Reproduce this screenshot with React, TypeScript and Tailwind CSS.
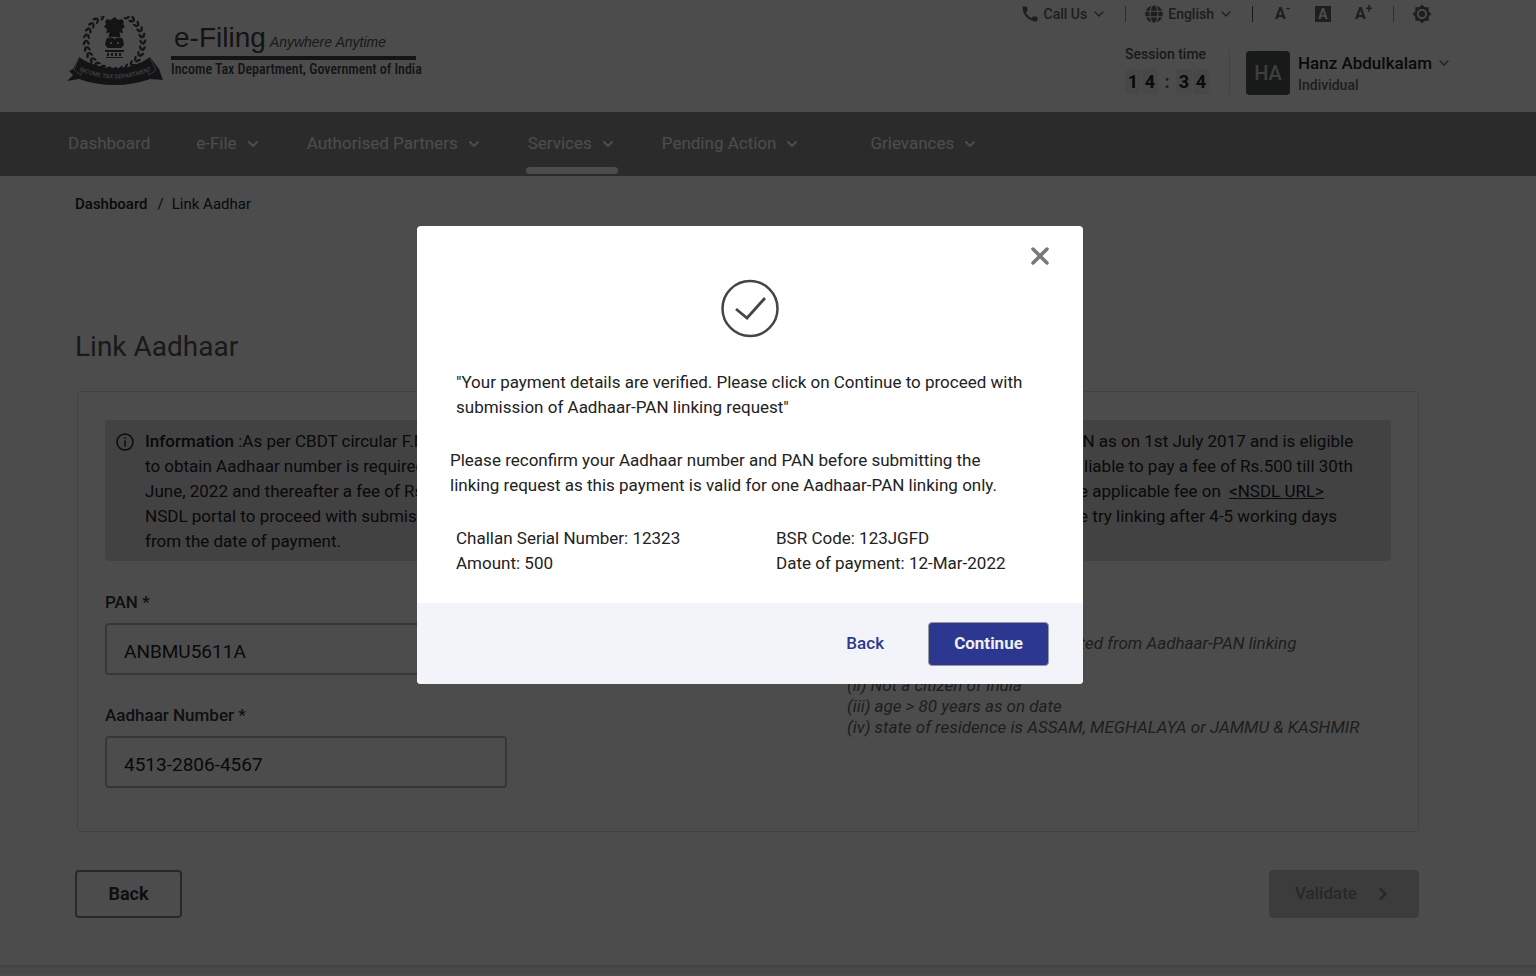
import { useState } from "react";
import { MdBrightnessHigh, MdCall } from "react-icons/md";
import { FaGlobe } from "react-icons/fa";
import { FiChevronDown, FiChevronRight, FiX } from "react-icons/fi";
import clsx from "clsx";

interface NavItem {
    title: string;
    hasMenu: boolean;
}

const navItems: NavItem[] = [
    { title: "Dashboard", hasMenu: false },
    { title: "e-File", hasMenu: true },
    { title: "Authorised Partners", hasMenu: true },
    { title: "Services", hasMenu: true },
    { title: "Pending Action", hasMenu: true },
    { title: "Grievances", hasMenu: true },
];

// angles of the leaf pairs around the wreath, open at the top
const leafAngles = Array.from({ length: 25 }, (_, i) => -64 + i * 12.8);

function Emblem() {
    return (
        <svg
            className="w-24 h-[70px] shrink-0 text-[#404448]"
            viewBox="0 0 96 70"
            fill="currentColor"
            aria-hidden="true"
        >
            {leafAngles.map((angle) => (
                <g key={angle} transform={`translate(47.5 26) rotate(${angle})`}>
                    <ellipse cx="30" cy="0" rx="1.3" ry="3" transform="rotate(28 30 0)" />
                    <ellipse cx="26.6" cy="0" rx="1.2" ry="2.8" transform="rotate(-28 26.6 0)" />
                </g>
            ))}
            <path d="M40 3l3.500 1 4-3 4 3 3.500-1 2 3-1 2 2 2.500-3 3 1 4-4-1.500-1 2.500h-7l-1-2.500-4 1.500 1-4-3-3 2-2.500-1-2z" />
            <path d="M42.500 16h10l1 5h-12zM39 24c1-3 5-3 8.500-1 3.500-2 7.500-2 8.500 1l1 5-3 3H41l-3-3z" />
            <path d="M38 34h19v2H38zM40 37h2v3h-2zM44 37h2v3h-2zM48 37h2v3h-2zM52 37h2v3h-2zM39 41h17v1H39z" />
            <circle cx="44" cy="27" r="1" fill="#fff" />
            <circle cx="51" cy="27" r="1" fill="#fff" />
            <path d="M12 41c22 15 50 15 71 0l9 12 4 11-13-1c-22 8-49 8-71 0L0 65l6-6-4-4 4-2z" />
            <path d="M12 42l-5 12 7 5 1-4M83 42l6 12-7 5-1-4" fill="none" stroke="#fff" strokeWidth="0.600" />
            <path id="ribbon" d="M11 54q36.500 17 75 0" fill="none" />
            <text className="font-bold" fontSize="6" fill="#c0c0c0" textAnchor="middle">
                <textPath href="#ribbon" startOffset="50%">
                    INCOME TAX DEPARTMENT
                </textPath>
            </text>
        </svg>
    );
}

function Logo() {
    return (
        <div className="flex pt-4 gap-2">
            <Emblem />
            <div className="w-[245px] pt-2 font-['Liberation_Sans'] text-[#404448] whitespace-nowrap">
                <div className="flex items-baseline gap-1 pl-[3px] h-9 leading-7 border-b-4 border-[#404448]">
                    <span className="text-[28px]">e-Filing</span>
                    <span className="text-sm italic text-[#555]">Anywhere Anytime</span>
                </div>
                <p className="font-['Roboto_Condensed','Liberation_Sans_Narrow','Liberation_Sans'] text-sm font-medium leading-[18px]">
                    Income Tax Department, Government of India
                </p>
            </div>
        </div>
    );
}

function TopLinks() {
    return (
        <div className="flex items-center gap-[18px] h-7 pr-5 text-sm font-medium text-[#666]">
            <button type="button" className="flex items-center gap-1">
                <MdCall className="size-5" />
                Call Us
                <FiChevronDown className="size-4" />
            </button>
            <span className="w-px h-4 bg-[#999]" />
            <button type="button" className="flex items-center gap-1">
                <FaGlobe className="size-[18px] mx-px" />
                English
                <FiChevronDown className="size-4" />
            </button>
            <span className="w-px h-4 bg-[#555]" />
            <div className="flex items-center gap-6 px-1">
                <button type="button" aria-label="Decrease text size" className="flex items-start w-4 text-base font-bold leading-5">
                    A<span className="text-xs leading-[10px]">-</span>
                </button>
                <button
                    type="button"
                    aria-label="Normal text size"
                    className="size-4 bg-[#666] text-white text-sm font-bold leading-4"
                >
                    A
                </button>
                <button type="button" aria-label="Increase text size" className="flex items-start w-4 text-base font-bold leading-5">
                    A<span className="text-xs leading-[10px]">+</span>
                </button>
            </div>
            <span className="w-px h-4 bg-[#999]" />
            <button type="button" aria-label="Contrast">
                <MdBrightnessHigh className="size-5" />
            </button>
        </div>
    );
}

function Digit({ value }: { value: string }) {
    return (
        <span className="w-4 h-[26px] rounded-sm bg-[#f2f2f2] text-center text-lg font-bold leading-[26px] text-[#222]">
            {value}
        </span>
    );
}

function UserArea() {
    return (
        <div className="flex items-end h-[50px] mt-[17px]">
            <div className="flex flex-col gap-1.5 text-sm text-[#555]">
                <p className="font-medium leading-[17px]">Session time</p>
                <div className="flex gap-px">
                    <Digit value="1" />
                    <Digit value="4" />
                    <span className="w-4 text-center text-lg font-bold leading-[26px]">:</span>
                    <Digit value="3" />
                    <Digit value="4" />
                </div>
            </div>
            <span className="w-px h-11 ml-5 mr-4 bg-[#ddd]" />
            <div className="flex items-center justify-center size-11 rounded-sm bg-[#505456] text-xl font-medium text-[#d0d0d0]">
                HA
            </div>
            <div className="pl-2">
                <button type="button" className="flex items-center gap-1 text-[17px] font-medium leading-6 text-[#222]">
                    Hanz Abdulkalam
                    <FiChevronDown className="size-4 text-[#666]" />
                </button>
                <p className="text-sm font-medium leading-5 text-[#666]">Individual</p>
            </div>
        </div>
    );
}

function Header() {
    return (
        <header className="flex justify-between h-28 pl-[67px] pr-[84px]">
            <Logo />
            <div className="flex flex-col items-end">
                <TopLinks />
                <UserArea />
            </div>
        </header>
    );
}

function Nav() {
    return (
        <nav className="flex gap-[46px] h-16 pl-[68px] bg-[#8f8f8f]">
            {navItems.map((item) => (
                <a
                    key={item.title}
                    href="#"
                    className={clsx(
                        "relative flex items-center gap-2 text-[17px] text-white",
                        item.title === "Grievances" && "ml-6"
                    )}
                >
                    {item.title}
                    {item.hasMenu && <FiChevronDown className="size-4" strokeWidth={3} />}
                    {item.title === "Services" && (
                        <span className="absolute -inset-x-0.5 bottom-0.5 h-[7px] rounded-full bg-white" />
                    )}
                </a>
            ))}
        </nav>
    );
}

function Information() {
    return (
        <div className="flex gap-[11px] rounded-sm bg-[#dcdcdc] pt-[9px] pb-[7px] pl-[11px] text-[17px] leading-[25px] text-[#222]">
            <svg className="size-[18px] mt-1 shrink-0" viewBox="0 0 18 18" fill="none" stroke="currentColor" aria-hidden="true">
                <circle cx="9" cy="9" r="8" strokeWidth="1.500" />
                <path d="M9 4.500v1.500M9 7.500v6" strokeWidth="1.500" />
            </svg>
            <div className="whitespace-nowrap">
                <p>
                    <span className="font-medium">Information </span>:As per CBDT circular F.No. 7/2022 dated
                    30/03/22, every person who has been allotted a permanent number PAN as on 1st July 2017 and is
                    eligible
                </p>
                <p>
                    to obtain Aadhaar number is required to link PAN with Aadhaar. Taxpayers who failed to do so latest
                    by 31st March 2022, are liable to pay a fee of Rs.500 till 30th
                </p>
                <p>
                    June, 2022 and thereafter a fee of Rs.1000 before submission of the Aadhaar-PAN linking request.
                    Kindly click here to pay the applicable fee on{" "}
                    <a href="#" className="ml-1 underline">
                        &lt;NSDL URL&gt;
                    </a>
                </p>
                <p>
                    NSDL portal to proceed with submission of linking request. If you have already paid the payable fee
                    at the NSDL portal, please try linking after 4-5 working days
                </p>
                <p>from the date of payment.</p>
            </div>
        </div>
    );
}

interface FieldProps {
    id: string;
    label: string;
    value: string;
}

function Field({ id, label, value }: FieldProps) {
    const [text, setText] = useState(value);

    return (
        <div>
            <label htmlFor={id} className="block h-[34px] pt-px text-[17px] font-medium leading-6 text-[#333]">
                {label} *
            </label>
            <input
                id={id}
                type="text"
                value={text}
                onChange={(e) => setText(e.target.value)}
                className="block w-full h-[52px] rounded-sm border-2 border-[#b8b8b8] px-[17px] pt-1 text-[19px] text-[#222] outline-none"
            />
        </div>
    );
}

function LinkForm() {
    return (
        <section className="ml-0.5 rounded-sm border border-[#ddd] pt-7 px-[27px] pb-[43px]">
            <Information />
            <div className="flex pt-7">
                <div className="flex flex-col gap-[27px] w-[402px]">
                    <Field id="pan" label="PAN" value="ANBMU5611A" />
                    <Field id="aadhaar" label="Aadhaar Number" value="4513-2806-4567" />
                </div>
                <div className="pl-[340px] pt-11 text-[17px] italic leading-[21px] text-[#666] whitespace-nowrap">
                    <p>Note : You might also be exempted from Aadhaar-PAN linking</p>
                    <p>(i) Non-resident</p>
                    <p>(ii) Not a citizen of India</p>
                    <p>(iii) age &gt; 80 years as on date</p>
                    <p>(iv) state of residence is ASSAM, MEGHALAYA or JAMMU &amp; KASHMIR</p>
                </div>
            </div>
        </section>
    );
}

function VerifiedDialog({ onClose }: { onClose: () => void }) {
    return (
        <div className="fixed inset-0 flex items-start justify-center bg-black/70 pt-[226px] pr-9">
            <div
                role="dialog"
                aria-modal="true"
                aria-label="Payment verified"
                className="relative w-[666px] rounded-sm overflow-hidden bg-white text-[17px] leading-[25px] text-[#222]"
            >
                <button type="button" aria-label="Close" onClick={onClose} className="absolute top-4 right-[29px] text-[#77777c]">
                    <FiX className="size-7" strokeWidth={3} />
                </button>
                <div className="flex flex-col gap-7 px-[33px] pt-[53px] pb-[27px]">
                    <svg
                        className="self-center size-[60px] mb-[3px]"
                        viewBox="0 0 60 60"
                        fill="none"
                        stroke="#454547"
                        strokeWidth="2.500"
                        aria-hidden="true"
                    >
                        <circle cx="30" cy="29.500" r="27.500" />
                        <path d="M16 30l11 9 18-20" strokeWidth="2.800" />
                    </svg>
                    <p className="pl-1.5">
                        "Your payment details are verified. Please click on Continue to proceed with
                        <br />
                        submission of Aadhaar-PAN linking request"
                    </p>
                    <p>
                        Please reconfirm your Aadhaar number and PAN before submitting the
                        <br />
                        linking request as this payment is valid for one Aadhaar-PAN linking only.
                    </p>
                    <div className="flex pl-1.5">
                        <div className="w-80">
                            <p>Challan Serial Number: 12323</p>
                            <p>Amount: 500</p>
                        </div>
                        <div>
                            <p>BSR Code: 123JGFD</p>
                            <p>Date of payment: 12-Mar-2022</p>
                        </div>
                    </div>
                </div>
                <div className="flex items-center justify-end gap-11 h-[81px] pr-[34px] bg-[#f3f4f9]">
                    <button type="button" onClick={onClose} className="font-medium text-[#2c388f]">
                        Back
                    </button>
                    <button
                        type="button"
                        onClick={onClose}
                        className="w-[121px] h-11 rounded-sm border border-[#9a9a9a] bg-[#2c388f] font-bold text-[#eee]"
                    >
                        Continue
                    </button>
                </div>
            </div>
        </div>
    );
}

export default function App() {
    const [showDialog, setShowDialog] = useState(true);

    return (
        <div className="min-h-screen bg-white font-['Roboto',sans-serif]">
            <Header />
            <Nav />
            <main className="pl-[75px] pr-[117px]">
                <div className="flex gap-2 pt-4 text-[15px] leading-6 text-[#222]">
                    <a href="#" className="font-medium">
                        Dashboard
                    </a>
                    <span className="pl-0.5">/</span>
                    <span>Link Aadhar</span>
                </div>
                <h1 className="pt-[111px] pb-6 text-[28px] leading-10 text-[#555]">Link Aadhaar</h1>
                <LinkForm />
                <div className="flex justify-between pt-[38px] pb-[47px]">
                    <button
                        type="button"
                        className="w-[107px] h-12 rounded-sm border-2 border-[#888] text-lg font-bold text-[#333]"
                    >
                        Back
                    </button>
                    <button
                        type="button"
                        className="flex items-center justify-center gap-4 w-[150px] h-12 rounded-sm bg-[#c8c8c8] text-[17px] font-medium text-[#888]"
                    >
                        Validate
                        <FiChevronRight className="size-5" strokeWidth={3} />
                    </button>
                </div>
            </main>
            <footer className="h-2.5 border-t-2 border-[#ddd] bg-[#f0f0f0]" />
            {showDialog && <VerifiedDialog onClose={() => setShowDialog(false)} />}
        </div>
    );
}
